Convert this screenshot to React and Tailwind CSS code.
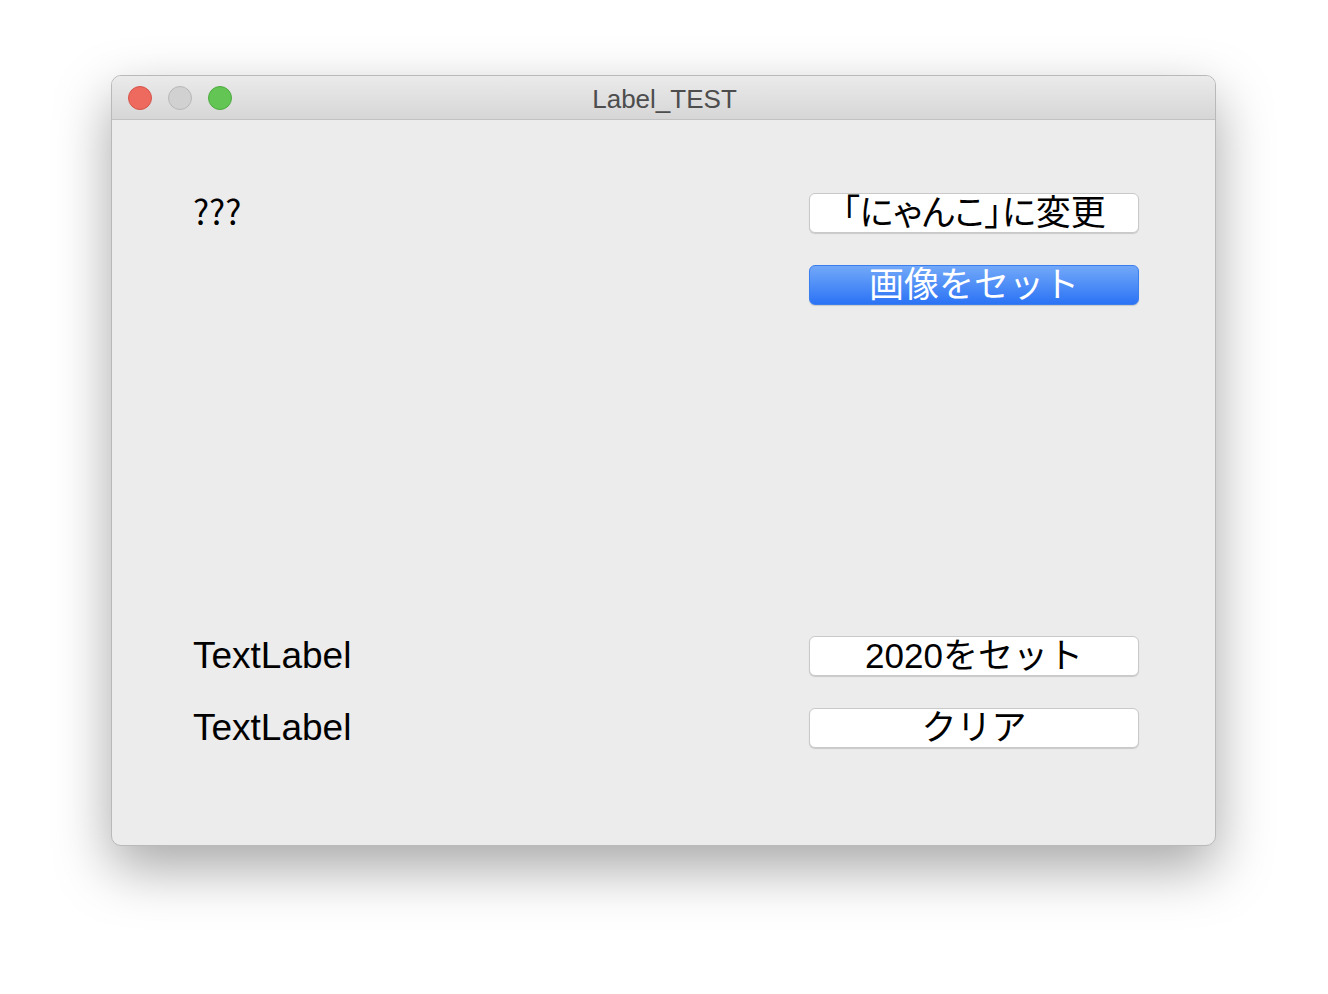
import React from "react";

const font = { fontFamily: '"Liberation Sans", "Noto Sans CJK JP", sans-serif' };

const Button = ({ children, primary, tight }) => (
  <button
    type="button"
    className={
      (primary
        ? "w-[330px] h-[40px] rounded-[6px] border border-[#3b7ef0] bg-gradient-to-b from-[#72a8f8] to-[#2b72f5] text-white text-[35px] leading-[36px] shadow-[0_1px_1px_rgba(0,0,0,0.15)]"
        : "w-[330px] h-[40px] rounded-[6px] border border-[#c9c9c9] bg-white text-black text-[35px] leading-[36px] shadow-[0_1px_1px_rgba(0,0,0,0.15)]") +
      (tight ? " [font-feature-settings:'palt']" : "")
    }
  >
    {children}
  </button>
);

export default function App() {
  return (
    <div className="w-[1328px] h-[994px] bg-white pt-[75px] pl-[111px]" style={font}>
      <div className="w-[1105px] h-[771px] rounded-[10px] overflow-hidden border border-[#b9b9b9] bg-[#ececec] shadow-[0_22px_55px_rgba(0,0,0,0.35)] flex flex-col">
        {/* title bar */}
        <div className="relative h-[44px] shrink-0 flex items-center justify-center pt-[3px] bg-gradient-to-b from-[#ebebeb] to-[#d6d6d6] border-b border-[#c2c2c2]">
          <div className="absolute left-[16px] top-[10px] flex gap-[16px]">
            <span className="w-[24px] h-[24px] rounded-full bg-[#ee6a5f] border border-[#d5544a]" />
            <span className="w-[24px] h-[24px] rounded-full bg-[#d1d1d1] border border-[#b8b8b8]" />
            <span className="w-[24px] h-[24px] rounded-full bg-[#62c554] border border-[#4fab41]" />
          </div>
          <span className="text-[26px] text-[#4d4d4d] -mr-[2px]">Label_TEST</span>
        </div>

        {/* body */}
        <div className="flex-1 pt-[73px] pl-[81px] pr-[76px]">
          <div className="flex items-center justify-between h-[40px]">
            <span className="text-[34px] text-black leading-none -mt-[5px]" style={{ fontFamily: '"Noto Sans CJK JP", sans-serif' }}>???</span>
            <Button tight>「にゃんこ」に変更</Button>
          </div>
          <div className="flex justify-end mt-[32px]">
            <Button primary>画像をセット</Button>
          </div>
          <div className="flex items-center justify-between h-[40px] mt-[331px]">
            <span className="text-[37px] text-black">TextLabel</span>
            <Button>2020をセット</Button>
          </div>
          <div className="flex items-center justify-between h-[40px] mt-[32px]">
            <span className="text-[37px] text-black">TextLabel</span>
            <Button>クリア</Button>
          </div>
        </div>
      </div>
    </div>
  );
}
